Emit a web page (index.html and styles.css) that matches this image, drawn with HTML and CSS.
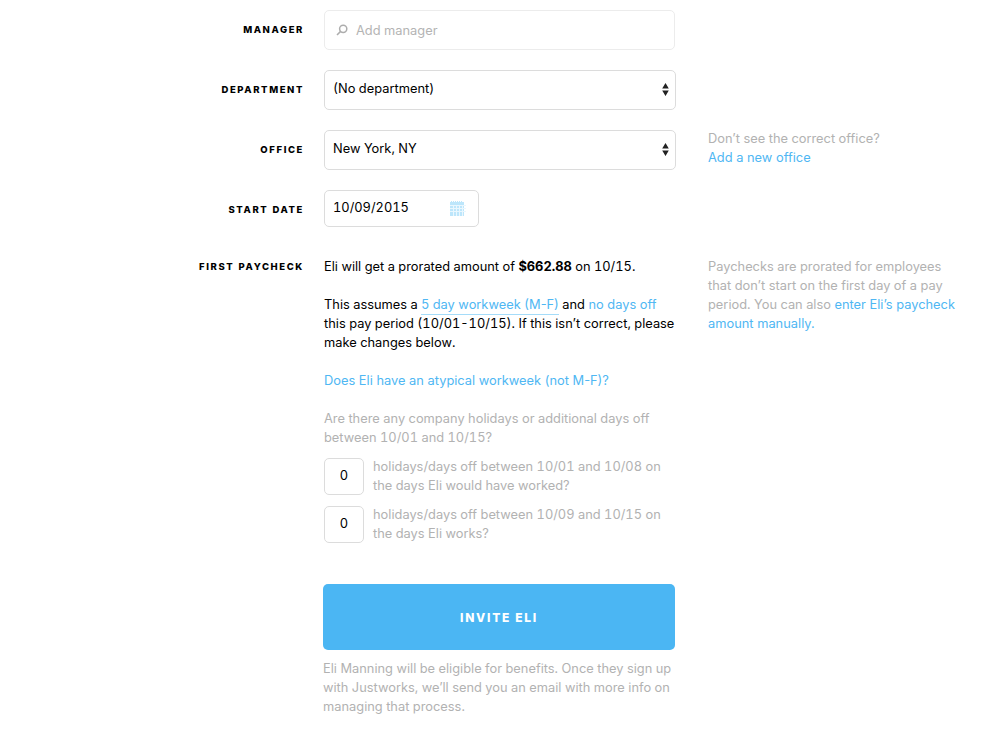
FILE: index.html
```html
<!DOCTYPE html>
<html lang="en">
<head>
<meta charset="utf-8">
<title>Invite Eli</title>
<link rel="stylesheet" href="styles.css">
</head>
<body>
<form class="form">
  <div class="row">
    <label class="label">Manager</label>
    <div class="control search-box">
      <svg class="search-icon" width="12" height="12" viewBox="0 0 12 12" fill="none" stroke="#adadad" stroke-width="1.5"><circle cx="7.2" cy="4.800" r="3.6"/><path d="M4.600 7.400L1 11"/></svg>
      <span class="placeholder">Add manager</span>
    </div>
  </div>
  <div class="row">
    <label class="label">Department</label>
    <div class="control select-box"><span>(No department)</span>
      <svg class="updown" width="7" height="13" viewBox="0 0 7 13" fill="#222"><path d="M3.500 0L6.800 5.400H.2zM3.500 13L.2 7.600h6.600z"/></svg>
    </div>
  </div>
  <div class="row">
    <label class="label">Office</label>
    <div class="control select-box"><span>New York, NY</span>
      <svg class="updown" width="7" height="13" viewBox="0 0 7 13" fill="#222"><path d="M3.500 0L6.800 5.400H.2zM3.500 13L.2 7.600h6.600z"/></svg>
    </div>
    <div class="help help-office">Don’t see the correct office?<br><a href="#">Add a new office</a></div>
  </div>
  <div class="row">
    <label class="label label-date">Start date</label>
    <div class="control date-box"><span>10/09/2015</span>
      <svg class="cal" width="16" height="15" viewBox="0 0 16 15"><path fill="#bde6fb" d="M1 0h1v1h1V0h1v1h1V0h1v1h1V0h1v1h1V0h1v1h1V0h1v1h2v14H0V1h1z"/><path stroke="#eaf7fe" stroke-width="1" d="M0 4.500h16M0 7.500h16M0 10.500h16M3.500 4v11M6.500 4v11M9.500 4v11M12.500 4v11"/></svg>
    </div>
  </div>
  <div class="row row-paycheck">
    <label class="label label-top">First paycheck</label>
    <div class="content">
      <p>Eli will get a prorated amount of <strong>$662.88</strong> on 10/15.</p>
      <p>This assumes a <a class="underlined" href="#">5 day workweek (M-F)</a> and <a href="#">no days off</a> this pay period (10/01-10/15). If this isn’t correct, please make changes below.</p>
      <p><a href="#">Does Eli have an atypical workweek (not M-F)?</a></p>
      <p class="muted question">Are there any company holidays or additional days off between 10/01 and 10/15?</p>
      <div class="days">
        <div class="day-box">0</div>
        <div class="muted">holidays/days off between 10/01 and 10/08 on the days Eli would have worked?</div>
      </div>
      <div class="days">
        <div class="day-box">0</div>
        <div class="muted">holidays/days off between 10/09 and 10/15 on the days Eli works?</div>
      </div>
    </div>
    <div class="help">Paychecks are prorated for employees that don’t start on the first day of a pay period. You can also <a href="#">enter Eli’s paycheck</a> <a href="#">amount manually.</a></div>
  </div>
  <div class="row row-submit">
    <div class="submit">
      <button type="button" class="invite">Invite Eli</button>
      <p class="note">Eli Manning will be eligible for benefits. Once they sign up with Justworks, we’ll send you an email with more info on managing that process.</p>
    </div>
  </div>
</form>
</body>
</html>
```
FILE: styles.css
```css
* { box-sizing: border-box; }
html, body { margin: 0; background: #fff; }
body {
  font-family: "Inter", "Liberation Sans", sans-serif;
  font-size: 12.85px;
  font-feature-settings: "tnum";
  line-height: 19px;
  color: #000;
  height: 748px;
  overflow: hidden;
}
a { color: #4fb7f3; text-decoration: none; font-feature-settings: normal; }
p { margin: 0 0 19px; }
.form { padding-top: 10px; }
.row {
  display: grid;
  grid-template-columns: 304px 352px 1fr;
  column-gap: 20px;
  margin-bottom: 20px;
  align-items: center;
}
.row > .control { grid-column: 2; }
.label {
  grid-column: 1;
  text-align: right;
  font-size: 9.5px;
  font-weight: 800;
  letter-spacing: 1.6px;
  text-transform: uppercase;
  position: relative;
  top: -1px;
}
.label-date { top: 1px; }
.label-top { top: 0; align-self: start; line-height: 19px; }
.control {
  display: flex;
  align-items: center;
  height: 40px;
  border: 1px solid #dcdcdc;
  border-radius: 5px;
  background: #fff;
}
.search-box { width: 351px; border-color: #ececec; padding-left: 11px; }
.search-icon { margin-right: 8px; flex: none; }
.placeholder { color: #b4b4b4; }
.select-box { justify-content: space-between; padding: 0 6px 3px 8px; }
.updown { position: relative; top: 1px; }
.date-box { width: 155px; height: 37px; justify-content: space-between; padding: 0 12px 3px 8px; }
.cal { position: relative; top: 1px; }
.help { grid-column: 3; color: #b2b2b2; width: 250px; margin-left: 12px; }
.help-office { position: relative; top: -2px; }
.row-paycheck { align-items: start; margin-top: 30px; margin-bottom: 0; }
.content { grid-column: 2; }
.muted { color: #b2b2b2; }
.underlined { border-bottom: 1px solid #a5dcf9; padding-bottom: 2px; }
.question { margin-bottom: 11px; }
.days { display: flex; gap: 9px; height: 37px; margin-bottom: 11px; align-items: flex-start; }
.days .muted { flex: 1; margin-top: -1px; }
.day-box {
  flex: none;
  width: 40px;
  height: 37px;
  border: 1px solid #dcdcdc;
  border-radius: 5px;
  display: flex;
  align-items: center;
  justify-content: center;
  padding-bottom: 2px;
}
.row-submit { margin-top: 30px; margin-bottom: 0; }
.submit { grid-column: 2; margin-left: -1px; width: 352px; }
.invite {
  display: block;
  width: 100%;
  height: 66px;
  border: 0;
  border-radius: 5px;
  background: #4bb6f3;
  color: #fff;
  font-family: inherit;
  font-size: 12px;
  font-weight: 800;
  letter-spacing: 1.7px;
  text-transform: uppercase;
  padding-bottom: 1px;
}
.note { color: #b2b2b2; margin: 9px 0 0; }
```
